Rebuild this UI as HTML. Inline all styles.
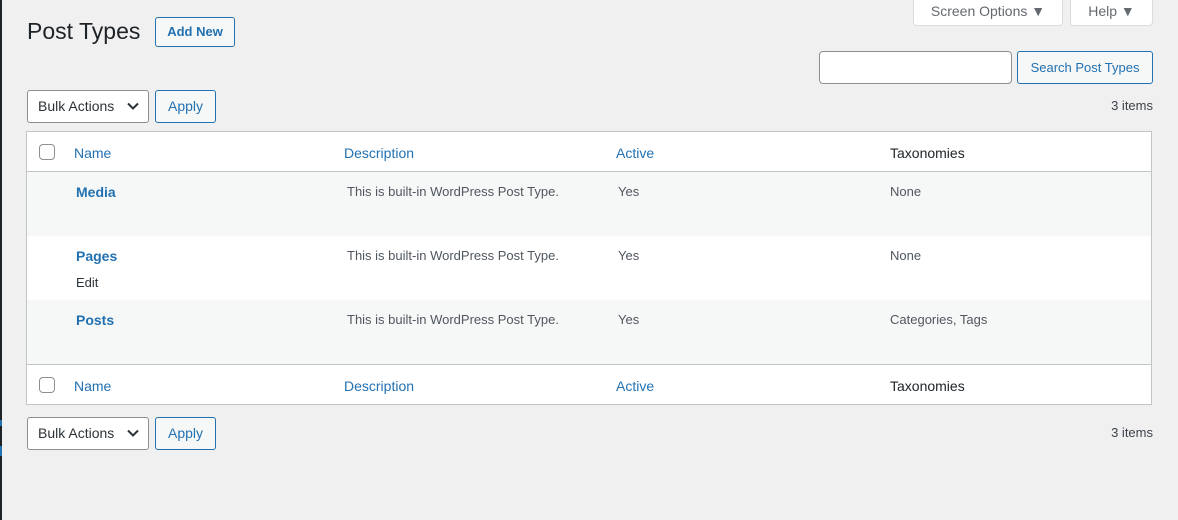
<!DOCTYPE html>
<html><head><style>
body{margin:0;width:1178px;height:520px;background:#f0f0f1;font-family:"Liberation Sans",sans-serif;color:#3c434a;position:relative;overflow:hidden;font-size:13px}
.a{position:absolute}
.btn{position:absolute;box-sizing:border-box;border:1px solid #2271b1;border-radius:3px;background:#f6f7f7;color:#2271b1;font-size:13px;text-align:center}
.sel{position:absolute;box-sizing:border-box;border:1px solid #8c8f94;border-radius:3px;background:#fff;color:#2c3338;font-size:14px;padding-left:10px}
.sel svg{position:absolute;right:9px;top:11px}
.cb{position:absolute;width:16px;height:16px;border:1px solid #8c8f94;border-radius:4px;background:#fff;box-sizing:border-box}
.h{position:absolute;font-size:14px;color:#2271b1}
.row{position:absolute;left:27px;width:1124px;height:64px}
.t{position:absolute;font-size:13px;color:#50575e}
.n{position:absolute;font-size:14px;font-weight:bold;color:#2271b1}
</style></head><body>
<div class="a" style="left:0;top:0;width:2px;height:520px;background:#1d2327"></div>
<div class="a" style="left:0;top:420px;width:2px;height:6px;background:#2271b1"></div>
<div class="a" style="left:0;top:446px;width:2px;height:10px;background:#2271b1"></div>
<div class="a" style="left:27px;top:18px;font-size:23px;color:#1d2327">Post Types</div>
<div class="btn" style="left:155px;top:17px;width:80px;height:30px;line-height:28px;font-weight:bold">Add New</div>
<div class="a" style="left:913px;top:-4px;width:150px;height:30px;background:#fff;border:1px solid #dcdcde;border-radius:0 0 4px 4px;box-sizing:border-box;text-align:center;line-height:28px;font-size:14px;color:#646970">Screen Options ▼</div>
<div class="a" style="left:1070px;top:-4px;width:83px;height:30px;background:#fff;border:1px solid #dcdcde;border-radius:0 0 4px 4px;box-sizing:border-box;text-align:center;line-height:28px;font-size:14px;color:#646970">Help ▼</div>
<div class="a" style="left:819px;top:51px;width:193px;height:33px;background:#fff;border:1px solid #8c8f94;border-radius:4px;box-sizing:border-box"></div>
<div class="btn" style="left:1017px;top:51px;width:136px;height:33px;line-height:31px">Search Post Types</div>
<div class="sel" style="left:27px;top:90px;width:122px;height:33px;line-height:31px">Bulk Actions<svg width="12" height="8" viewBox="0 0 12 8"><path d="M1 1.5L6 6.5L11 1.5" fill="none" stroke="#2c3338" stroke-width="2"/></svg></div>
<div class="btn" style="left:155px;top:90px;width:61px;height:33px;line-height:31px;font-size:14px">Apply</div>
<div class="a" style="right:25px;top:98px">3 items</div>
<div class="a" style="left:26px;top:131px;width:1126px;height:274px;background:#fff;border:1px solid #c3c4c7;box-sizing:border-box"></div>
<div class="a" style="left:27px;top:171px;width:1124px;height:1px;background:#c3c4c7"></div>
<div class="row" style="top:172px;background:#f6f7f7"></div>
<div class="row" style="top:300px;background:#f6f7f7"></div>
<div class="a" style="left:27px;top:364px;width:1124px;height:1px;background:#c3c4c7"></div>
<div class="cb" style="left:39px;top:144px"></div>
<div class="h" style="left:74px;top:145px">Name</div><div class="h" style="left:344px;top:145px">Description</div><div class="h" style="left:616px;top:145px">Active</div><div class="h" style="left:890px;top:145px;color:#1d2327">Taxonomies</div>
<div class="cb" style="left:39px;top:377px"></div>
<div class="h" style="left:74px;top:378px">Name</div><div class="h" style="left:344px;top:378px">Description</div><div class="h" style="left:616px;top:378px">Active</div><div class="h" style="left:890px;top:378px;color:#1d2327">Taxonomies</div>
<div class="n" style="left:76px;top:184px">Media</div><div class="t" style="left:347px;top:184px">This is built-in WordPress Post Type.</div><div class="t" style="left:618px;top:184px">Yes</div><div class="t" style="left:890px;top:184px">None</div>
<div class="n" style="left:76px;top:248px">Pages</div><div class="t" style="left:76px;top:275px;color:#2c3338">Edit</div><div class="t" style="left:347px;top:248px">This is built-in WordPress Post Type.</div><div class="t" style="left:618px;top:248px">Yes</div><div class="t" style="left:890px;top:248px">None</div>
<div class="n" style="left:76px;top:312px">Posts</div><div class="t" style="left:347px;top:312px">This is built-in WordPress Post Type.</div><div class="t" style="left:618px;top:312px">Yes</div><div class="t" style="left:890px;top:312px">Categories, Tags</div>
<div class="sel" style="left:27px;top:417px;width:122px;height:33px;line-height:31px">Bulk Actions<svg width="12" height="8" viewBox="0 0 12 8"><path d="M1 1.5L6 6.5L11 1.5" fill="none" stroke="#2c3338" stroke-width="2"/></svg></div>
<div class="btn" style="left:155px;top:417px;width:61px;height:33px;line-height:31px;font-size:14px">Apply</div>
<div class="a" style="right:25px;top:425px">3 items</div>
</body></html>
